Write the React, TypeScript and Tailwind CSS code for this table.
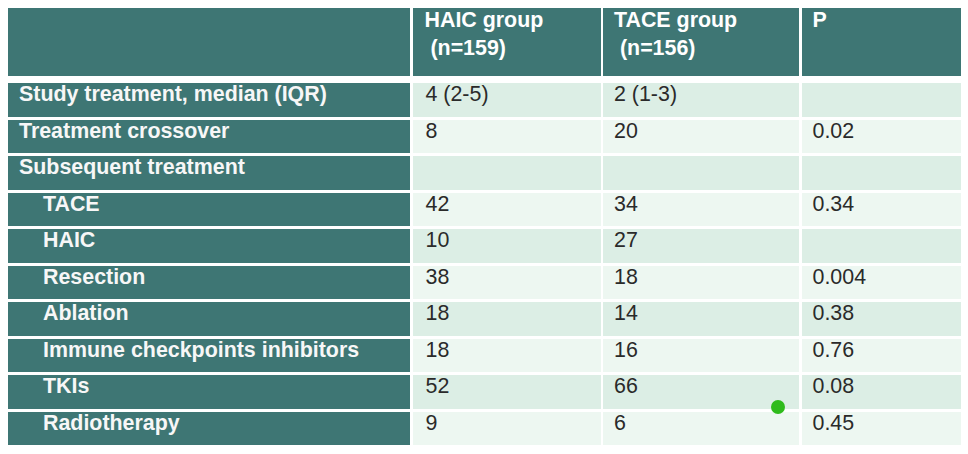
import React from "react";

type Row = {
  label: string;
  indent?: boolean;
  haic: string;
  tace: string;
  p: string;
};

const rows: Row[] = [
  { label: "Study treatment, median (IQR)", haic: "4 (2-5)", tace: "2 (1-3)", p: "" },
  { label: "Treatment crossover", haic: "8", tace: "20", p: "0.02" },
  { label: "Subsequent treatment", haic: "", tace: "", p: "" },
  { label: "TACE", indent: true, haic: "42", tace: "34", p: "0.34" },
  { label: "HAIC", indent: true, haic: "10", tace: "27", p: "" },
  { label: "Resection", indent: true, haic: "38", tace: "18", p: "0.004" },
  { label: "Ablation", indent: true, haic: "18", tace: "14", p: "0.38" },
  { label: "Immune checkpoints inhibitors", indent: true, haic: "18", tace: "16", p: "0.76" },
  { label: "TKIs", indent: true, haic: "52", tace: "66", p: "0.08" },
  { label: "Radiotherapy", indent: true, haic: "9", tace: "6", p: "0.45" },
];

export default function App() {
  return (
    <div
      className="relative w-[968px] h-[454px] bg-white overflow-hidden pl-[8px] pt-[8px]"
      style={{ fontFamily: '"Liberation Sans", Arial, sans-serif' }}
    >
      {/* header */}
      <div className="grid grid-cols-[402px_188px_196px_159px] gap-x-[2.5px] h-[68px] text-[21.4px] leading-none font-bold text-white">
        <div className="bg-[#3e7674]" />
        <div className="bg-[#3e7674] pl-[12px] pt-[2px]">
          <div>HAIC group</div>
          <div className="mt-[7px] whitespace-pre"> (n=159)</div>
        </div>
        <div className="bg-[#3e7674] pl-[11px] pt-[2px]">
          <div>TACE group</div>
          <div className="mt-[7px] whitespace-pre"> (n=156)</div>
        </div>
        <div className="bg-[#3e7674] pl-[11px] pt-[2px]">P</div>
      </div>

      {/* body */}
      <div className="mt-[7px] flex flex-col gap-y-[3px]">
        {rows.map((r, i) => {
          const cell = i % 2 === 0 ? "bg-[#dceee5]" : "bg-[#edf7f1]";
          return (
            <div
              key={r.label}
              className="grid grid-cols-[402px_188px_196px_159px] gap-x-[2.5px] h-[33.5px] text-[21.4px] leading-none"
            >
              <div
                className={
                  "bg-[#3e7674] font-bold text-[#f7f7f7] pt-[1px] " +
                  (r.indent ? "pl-[35px]" : "pl-[11px]")
                }
              >
                {r.label}
              </div>
              <div className={cell + " pl-[13px] pt-[1px] text-[#2a2a2a]"}>{r.haic}</div>
              <div className={cell + " pl-[11px] pt-[1px] text-[#2a2a2a]"}>{r.tace}</div>
              <div className={cell + " pl-[11px] pt-[1px] text-[#2a2a2a]"}>{r.p}</div>
            </div>
          );
        })}
      </div>

      {/* pointer dot */}
      <div className="absolute left-[771px] top-[400px] w-[14px] h-[14px] rounded-full bg-[#2fbb1c]" />
    </div>
  );
}
